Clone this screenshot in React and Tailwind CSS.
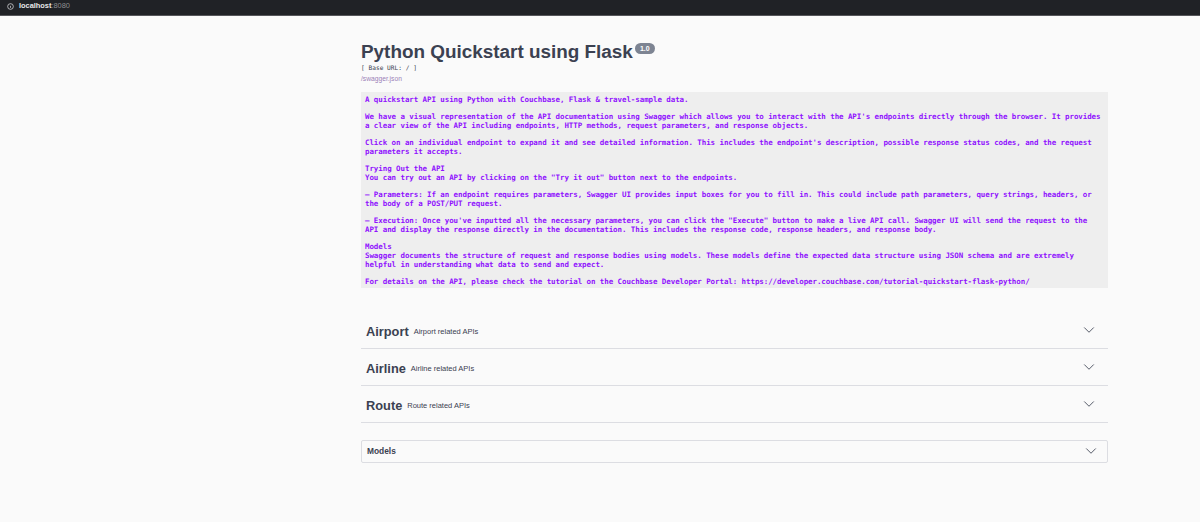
import React from "react";
import { ChevronDown } from "lucide-react";

const sans = "font-['Liberation_Sans',Arial,sans-serif]";
const mono = "font-['DejaVu_Sans_Mono',monospace]";

const description = [
  "A quickstart API using Python with Couchbase, Flask & travel-sample data.",
  "",
  "We have a visual representation of the API documentation using Swagger which allows you to interact with the API's endpoints directly through the browser. It provides",
  "a clear view of the API including endpoints, HTTP methods, request parameters, and response objects.",
  "",
  "Click on an individual endpoint to expand it and see detailed information. This includes the endpoint's description, possible response status codes, and the request",
  "parameters it accepts.",
  "",
  "Trying Out the API",
  'You can try out an API by clicking on the "Try it out" button next to the endpoints.',
  "",
  "– Parameters: If an endpoint requires parameters, Swagger UI provides input boxes for you to fill in. This could include path parameters, query strings, headers, or",
  "the body of a POST/PUT request.",
  "",
  '– Execution: Once you\'ve inputted all the necessary parameters, you can click the "Execute" button to make a live API call. Swagger UI will send the request to the',
  "API and display the response directly in the documentation. This includes the response code, response headers, and response body.",
  "",
  "Models",
  "Swagger documents the structure of request and response bodies using models. These models define the expected data structure using JSON schema and are extremely",
  "helpful in understanding what data to send and expect.",
  "",
  "For details on the API, please check the tutorial on the Couchbase Developer Portal: https://developer.couchbase.com/tutorial-quickstart-flask-python/",
];

const tags = [
  { name: "Airport", text: "Airport related APIs" },
  { name: "Airline", text: "Airline related APIs" },
  { name: "Route", text: "Route related APIs" },
];

const TagRow = ({ name, text }) => (
  <div className="flex items-center h-[37px] border-b border-[#dcdde2] pt-[4px] pl-[5px] pr-[10px]">
    <span className="text-[12.8px] font-bold text-[#3b4151]">{name}</span>
    <span className="ml-[5px] text-[7.5px] text-[#3b4151] flex-1">{text}</span>
    <ChevronDown size={18} strokeWidth={1.15} className="text-[#3b4151] -mt-[4px]" />
  </div>
);

const App = () => {
  return (
    <div className={`h-[522px] overflow-hidden bg-[#fafafa] ${sans}`}>
      {/* Browser address bar */}
      <div className="flex items-center h-[16px] bg-[#202226] border-b border-[#55565a] pl-[7px] pb-[3px]">
        <svg width="7" height="7" viewBox="0 0 16 16" fill="none" stroke="#c4c5c7" strokeWidth="2">
          <circle cx="8" cy="8" r="6.5" />
          <path d="M8 7v4M8 4.5v.5" />
        </svg>
        <span className="ml-[5px] text-[7.4px] font-bold text-[#e8e8e9]">localhost</span>
        <span className="text-[7.4px] text-[#8d8e91]">:8080</span>
      </div>

      <div className="w-[747px] ml-[361px]">
        {/* Title */}
        <div className="flex items-start mt-[24px]">
          <h1 className="text-[18.9px] leading-[24px] font-bold text-[#3b4151]">Python Quickstart using Flask</h1>
          <span className="ml-[2px] mt-[3px] px-[5px] h-[11px] leading-[11px] rounded-full bg-[#7d8492] text-white text-[7px] font-bold">1.0</span>
        </div>
        <div className={`${mono} text-[6.2px] leading-[8px] text-[#3b4151]`}>[ Base URL: / ]</div>
        <div className="mt-[3px] text-[6.7px] leading-[8px] text-[#9a7fb8]">/swagger.json</div>

        {/* Description */}
        <pre className={`${mono} mt-[9px] bg-[#eeeeee] pl-[4px] pt-[4px] pb-[1px] text-[7.47px] leading-[8.67px] tracking-[-0.066px] font-bold text-[#9012fe] whitespace-pre`}>
          {description.join("\n")}
        </pre>

        {/* Tags */}
        <div className="mt-[24px]">
          {tags.map((tag) => (
            <TagRow key={tag.name} {...tag} />
          ))}
        </div>

        {/* Models */}
        <div className="mt-[17px] flex items-center h-[23px] border border-[#dcdde2] rounded-[2px] pl-[5px] pr-[7px]">
          <span className="flex-1 text-[8.4px] font-bold text-[#3b4151]">Models</span>
          <ChevronDown size={18} strokeWidth={1.15} className="text-[#3b4151]" />
        </div>
      </div>
    </div>
  );
};

export default App;
